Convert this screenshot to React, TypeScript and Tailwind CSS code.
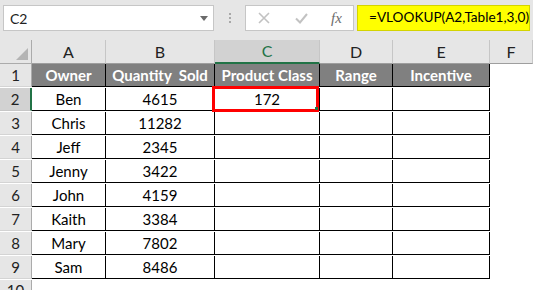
import React from "react";

const cols = ["A", "B", "C", "D", "E", "F"];
const data: [string, string][] = [
  ["Ben", "4615"],
  ["Chris", "11282"],
  ["Jeff", "2345"],
  ["Jenny", "3422"],
  ["John", "4159"],
  ["Kaith", "3384"],
  ["Mary", "7802"],
  ["Sam", "8486"],
];
const heads = ["Owner", "Quantity\u00a0\u00a0Sold", "Product Class", "Range", "Incentive"];

export default function App() {
  return (
    <div className="w-[533px] h-[290px] overflow-hidden bg-white font-['Lato',sans-serif] text-black">
      {/* formula bar */}
      <div className="h-[40px] bg-[#e6e6e6] flex items-start pt-[5px] pl-[3px]">
        <div className="w-[211px] h-[26px] bg-white border border-[#c6c6c6] flex items-center justify-between pl-[6px] pr-[5px]">
          <span className="text-[14px] text-[#222]">C2</span>
          <svg width="8" height="5" viewBox="0 0 8 5"><path d="M0 0h8L4 5z" fill="#6b6b6b" /></svg>
        </div>
        <div className="w-[31px] h-[26px] flex flex-col items-center justify-center gap-[2px]">
          <div className="w-[2px] h-[2px] bg-[#a8a8a8]" />
          <div className="w-[2px] h-[2px] bg-[#a8a8a8]" />
          <div className="w-[2px] h-[2px] bg-[#a8a8a8]" />
        </div>
        <div className="w-[109px] h-[26px] bg-white border border-[#c6c6c6] flex items-center">
          <div className="w-[36px] flex justify-center">
            <svg width="12" height="12" viewBox="0 0 12 12"><path d="M1 1L11 11M11 1L1 11" stroke="#c2c2c2" strokeWidth="1.6" /></svg>
          </div>
          <div className="w-[38px] flex justify-center">
            <svg width="13" height="11" viewBox="0 0 13 11"><path d="M1 5.5L5 9.5L12 1" stroke="#c2c2c2" strokeWidth="2" fill="none" /></svg>
          </div>
          <div className="flex-1 flex justify-center">
            <span className="italic text-[15px] text-[#6b6b6b] font-['Liberation_Serif',serif] leading-none">fx</span>
          </div>
        </div>
        <div className="ml-[3px] w-[173px] h-[26px] bg-[#ffff00] border border-[#d4d400] flex items-center pl-[11px] overflow-hidden">
          <span className="text-[13.6px] leading-none whitespace-nowrap">=VLOOKUP(A2,Table1,3,0)</span>
        </div>
      </div>

      {/* grid */}
      <div className="grid grid-cols-[32px_74px_109px_105px_73px_97px_1fr] auto-rows-[24px]">
        {/* column header row */}
        <div className="relative bg-[#e6e6e6] border-r border-b border-[#ababab]">
          <svg className="absolute right-[3px] bottom-[3px]" width="12" height="12" viewBox="0 0 12 12"><path d="M12 0V12H0z" fill="#b4b4b4" /></svg>
        </div>
        {cols.map((c) =>
          c === "C" ? (
            <div key={c} className="bg-[#d2d2d2] border-r border-[#c6c6c6] border-b-2 border-b-[#217346] flex items-center justify-center text-[16px] text-[#217346]">
              {c}
            </div>
          ) : (
            <div key={c} className="bg-[#e6e6e6] border-r border-[#c6c6c6] border-b border-b-[#9e9e9e] flex items-center justify-center text-[16px] text-[#222]">
              {c}
            </div>
          )
        )}

        {/* row 1 */}
        <div className="h-[23px] bg-[#e6e6e6] border-r border-r-[#ababab] border-b border-b-[#d4d4d4] flex items-center justify-center text-[15px] text-[#222]">1</div>
        {heads.map((h) => (
          <div key={h} className="h-[23px] bg-[#808080] border-r border-b border-black flex items-center justify-center text-[15px] font-bold text-white whitespace-nowrap">
            {h}
          </div>
        ))}
        <div className="h-[23px] bg-white" />

        {data.map(([n, q], i) => {
          const r = i + 2;
          return (
            <React.Fragment key={r}>
              {r === 2 ? (
                <div className="h-[23px] bg-[#d2d2d2] border-r-2 border-r-[#217346] border-b border-b-[#c6c6c6] flex items-center justify-center text-[15px] text-[#222]">{r}</div>
              ) : (
                <div className="h-[23px] bg-[#e6e6e6] border-r border-r-[#ababab] border-b border-b-[#d4d4d4] flex items-center justify-center text-[15px] text-[#222]">{r}</div>
              )}
              <div className="h-[23px] border-r border-b border-black flex items-center justify-center text-[15px]">{n}</div>
              <div className="h-[23px] border-r border-b border-black flex items-center justify-center text-[15px]">{q}</div>
              <div className="relative h-[23px] border-r border-b border-black flex items-center justify-center text-[15px]">
                {r === 2 ? "172" : ""}
                {r === 2 && (
                  <div className="absolute left-[-3px] top-[-2px] w-[107px] h-[26px] border-[3px] border-[#ff0000]">
                    <div className="absolute left-[100px] top-[18px] w-[3px] h-[3px] bg-[#217346]" />
                  </div>
                )}
              </div>
              <div className="h-[23px] border-r border-b border-black" />
              <div className="h-[23px] border-r border-b border-black" />
              <div className="h-[23px] bg-white" />
            </React.Fragment>
          );
        })}

        {/* row 10 */}
        <div className="h-[23px] bg-[#e6e6e6] border-r border-r-[#ababab] flex items-start pt-[2px] justify-center text-[15px] leading-[17px] text-[#222]">10</div>
        <div className="col-span-6 h-[23px] bg-white" />
      </div>
    </div>
  );
}
